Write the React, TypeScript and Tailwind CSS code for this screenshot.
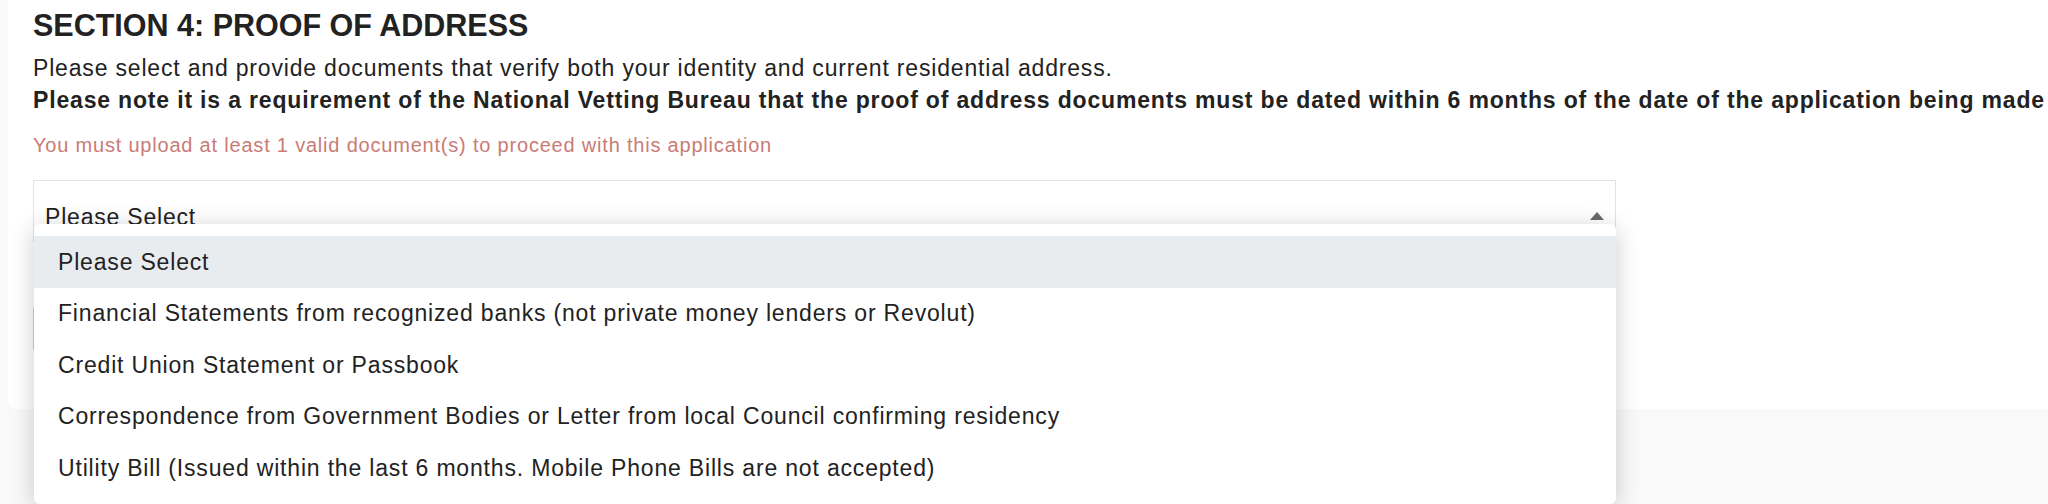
import React from "react";

const options = [
  "Please Select",
  "Financial Statements from recognized banks (not private money lenders or Revolut)",
  "Credit Union Statement or Passbook",
  "Correspondence from Government Bodies or Letter from local Council confirming residency",
  "Utility Bill (Issued within the last 6 months. Mobile Phone Bills are not accepted)",
];

export default function App() {
  return (
    <div className="h-[504px] w-full overflow-hidden bg-[#f9f9f9] pl-2 font-['Liberation_Sans',Arial,sans-serif] text-[#222222]">
      <div className="h-[409px] w-full rounded-bl-lg bg-white pl-[25px] pt-[7px]">
        <h2 className="text-[30.5px] font-bold leading-[36px]">SECTION 4: PROOF OF ADDRESS</h2>
        <p className="mt-[9px] whitespace-nowrap text-[23px] leading-[32px] tracking-[0.82px]">
          Please select and provide documents that verify both your identity and current residential address.
        </p>
        <p className="whitespace-nowrap text-[23px] font-bold leading-[32px] tracking-[0.83px]">
          Please note it is a requirement of the National Vetting Bureau that the proof of address documents must be dated within 6 months of the date of the application being made
        </p>
        <p className="mt-[15px] whitespace-nowrap text-[20px] leading-[28px] tracking-[0.8px] text-[#c97b76]">
          You must upload at least 1 valid document(s) to proceed with this application
        </p>
        <div className="relative mt-[21px] w-[1583px]">
          <div className="flex h-[62px] items-start justify-between border border-[#e3e3e3] bg-white pl-[11px] pr-[11px] pt-[20px]">
            <span className="text-[23px] leading-[32px] tracking-[0.8px]">Please Select</span>
            <svg width="14" height="8" viewBox="0 0 14 8" className="mt-[11px]">
              <polygon points="7,0 14,8 0,8" fill="#6b6b6b" />
            </svg>
          </div>
          <div className="mt-[63px] h-[47px] w-[700px] rounded-sm border border-[#cfcfcf] bg-white" />
          <div className="absolute left-px right-0 top-[44px] z-10 rounded-md bg-white pb-[10px] pt-[12px] shadow-[0_4px_24px_rgba(0,0,0,0.2)]">
            {options.map((o, i) => (
              <div
                key={o}
                className={
                  "flex h-[51.5px] items-center whitespace-nowrap px-[24px] text-[23px] tracking-[0.82px] " +
                  (i === 0 ? "bg-[#e9ecef]" : "bg-white")
                }
              >
                {o}
              </div>
            ))}
          </div>
        </div>
      </div>
    </div>
  );
}
